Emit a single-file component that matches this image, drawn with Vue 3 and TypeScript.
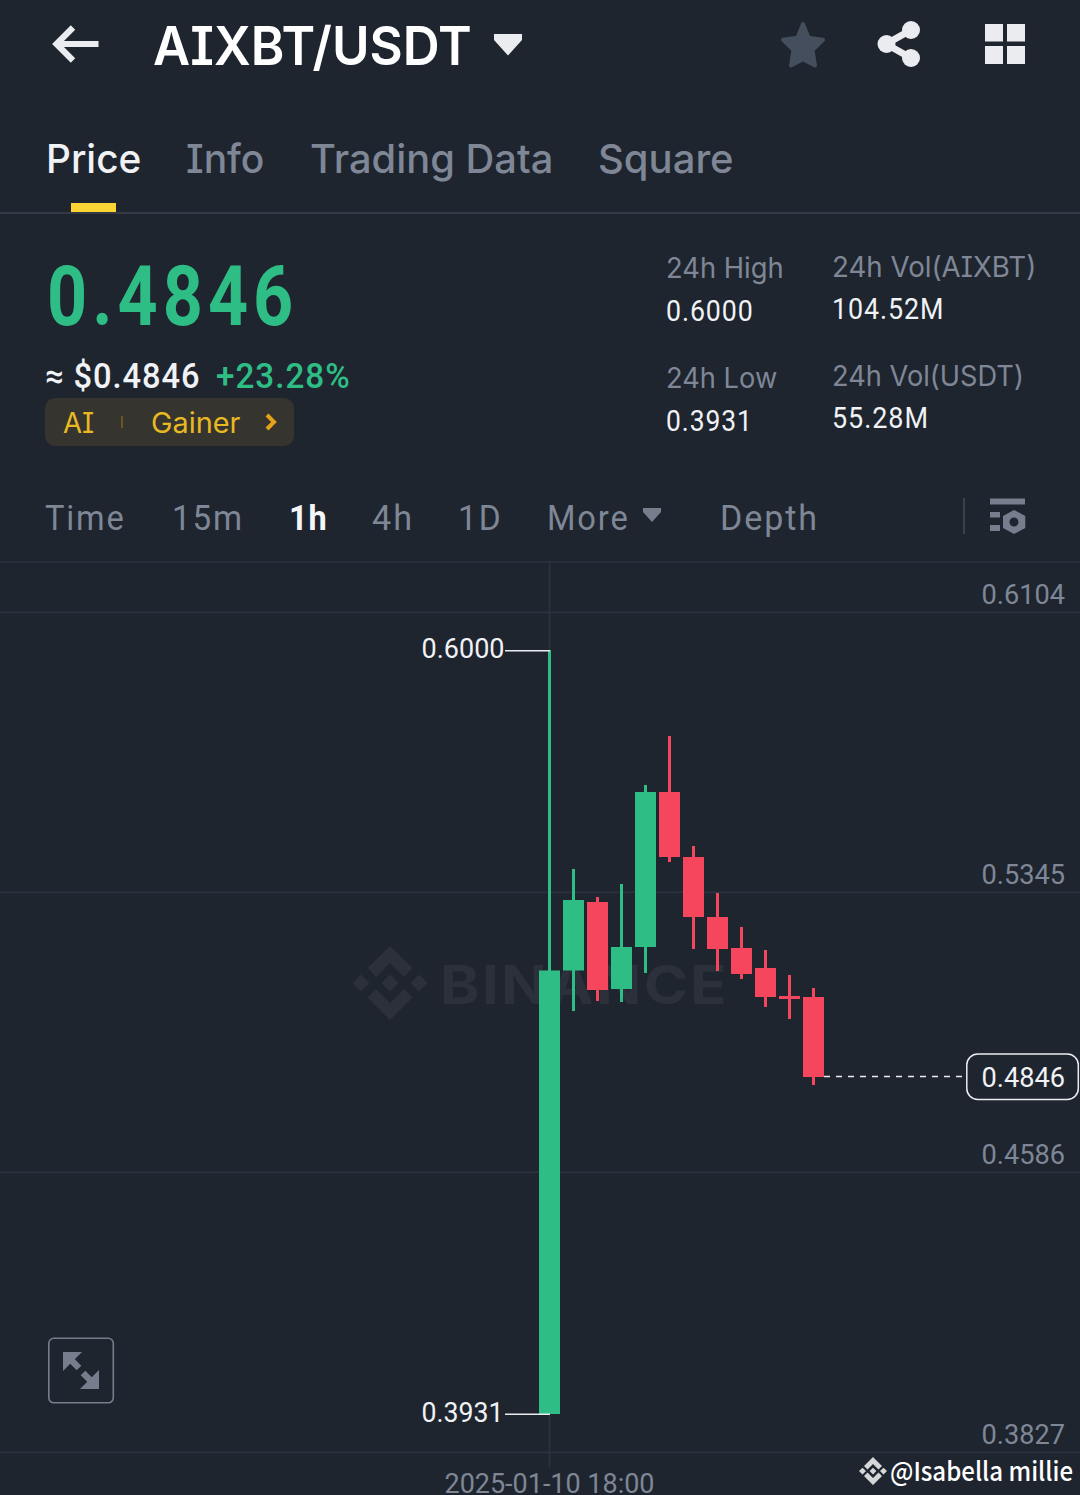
<script setup lang="ts">
import type { Directive } from 'vue'

// Condenses or widens a label so that it takes exactly the given width.
const vFit: Directive<HTMLElement, number> = {
  mounted(el, binding) {
    const natural = el.offsetWidth
    if (!natural) return
    el.style.transform = `scaleX(${binding.value / natural})`
    el.style.marginRight = `${binding.value - natural}px`
  },
}

interface Tab { label: string; width: number }
interface Stat { label: string; labelWidth: number; value: string; valueWidth: number }
interface Candle { open: number; close: number; high: number; low: number; up: boolean }

const tabs: Tab[] = [
  { label: 'Price', width: 95 },
  { label: 'Info', width: 78 },
  { label: 'Trading Data', width: 243 },
  { label: 'Square', width: 136 },
]

const statColumns: Stat[][] = [
  [
    { label: '24h High', labelWidth: 118, value: '0.6000', valueWidth: 88 },
    { label: '24h Low', labelWidth: 111, value: '0.3931', valueWidth: 87 },
  ],
  [
    { label: '24h Vol(AIXBT)', labelWidth: 204, value: '104.52M', valueWidth: 112 },
    { label: '24h Vol(USDT)', labelWidth: 192, value: '55.28M', valueWidth: 97 },
  ],
]

const gridLines = [
  { y: 612, label: '0.6104' },
  { y: 892, label: '0.5345' },
  { y: 1172, label: '0.4586' },
  { y: 1452, label: '0.3827' },
]

const candles: Candle[] = [
  { open: 1414, close: 970.5, high: 650, low: 1414, up: true },
  { open: 970.5, close: 900, high: 869, low: 1011, up: true },
  { open: 902, close: 990, high: 897, low: 1001, up: false },
  { open: 989, close: 947, high: 884, low: 1002, up: true },
  { open: 947, close: 792, high: 785, low: 973, up: true },
  { open: 792, close: 857, high: 736, low: 862, up: false },
  { open: 857, close: 917, high: 846, low: 949, up: false },
  { open: 917, close: 949, high: 893, low: 971, up: false },
  { open: 948, close: 974, high: 927, low: 979, up: false },
  { open: 968, close: 997, high: 950, low: 1007, up: false },
  { open: 996, close: 999, high: 975, low: 1019, up: false },
  { open: 997, close: 1077, high: 988, low: 1085, up: false },
]
</script>

<template>
  <main class="screen">
    <header class="header">
      <svg class="back" width="47" height="40" viewBox="0 0 47 40">
        <path d="M21 3.500 4.500 20 21 36.500M4 20H46.500" fill="none" stroke="#eaecef" stroke-width="6.200" />
      </svg>
      <h1 class="pair"><span v-fit="319" class="fit">AIXBT/USDT</span></h1>
      <svg class="caret" width="28" height="22" viewBox="0 0 28 22">
        <path d="M0 0H28V6L14 21.500 0 6Z" fill="#eaecef" />
      </svg>
      <svg class="star" width="46" height="48" viewBox="0 0 46 48">
        <path d="M23 3 28.500 16.800 43 18.700 32.500 29 35 44.500 23 38.300 11 44.500 13.500 29 3 18.700 17.500 16.800Z" fill="#454e5c" stroke="#454e5c" stroke-width="4" stroke-linejoin="round" />
      </svg>
      <svg class="share" width="44" height="46" viewBox="0 0 44 46">
        <path d="M34 9 9 23 34 37" fill="none" stroke="#eaecef" stroke-width="6.800" />
        <circle cx="34" cy="9" r="9" fill="#eaecef" />
        <circle cx="9.500" cy="23" r="9" fill="#eaecef" />
        <circle cx="34" cy="37" r="9" fill="#eaecef" />
      </svg>
      <svg class="apps" width="40" height="40" viewBox="0 0 40 40">
        <path d="M0 0H18V17.500H0ZM22 0H40V17.500H22ZM0 22H18V40H0ZM22 22H40V40H22Z" fill="#eaecef" />
      </svg>
    </header>

    <nav class="tabs">
      <a v-for="(tab, i) in tabs" :key="tab.label" class="tab" :class="{ active: i === 0 }">
        <span v-fit="tab.width" class="fit">{{ tab.label }}</span>
      </a>
    </nav>

    <section class="summary">
      <div class="quote">
        <div class="price"><span v-fit="251" class="fit">0.4846</span></div>
        <div class="fiat">
          <span v-fit="156" class="fit">≈ $0.4846</span>
          <span v-fit="135" class="fit change">+23.28%</span>
        </div>
        <div class="tags">
          <span v-fit="31" class="fit">AI</span>
          <i class="tag-rule"></i>
          <span v-fit="89" class="fit">Gainer</span>
          <svg class="chevron" width="12" height="18" viewBox="0 0 12 18">
            <path d="M2 2 9 9 2 16" fill="none" stroke="#e6a21a" stroke-width="4" />
          </svg>
        </div>
      </div>
      <div v-for="(column, c) in statColumns" :key="c" class="stats">
        <dl v-for="stat in column" :key="stat.label" class="stat">
          <dt><span v-fit="stat.labelWidth" class="fit">{{ stat.label }}</span></dt>
          <dd><span v-fit="stat.valueWidth" class="fit">{{ stat.value }}</span></dd>
        </dl>
      </div>
    </section>

    <div class="intervals">
      <span class="interval i-time"><span v-fit="81" class="fit">Time</span></span>
      <span class="interval i-15m"><span v-fit="72" class="fit">15m</span></span>
      <span class="interval i-1h"><span v-fit="39" class="fit">1h</span></span>
      <span class="interval i-4h"><span v-fit="42" class="fit">4h</span></span>
      <span class="interval i-1d"><span v-fit="45" class="fit">1D</span></span>
      <span class="interval i-more"><span v-fit="83" class="fit">More</span></span>
      <svg class="more-caret" width="18" height="14" viewBox="0 0 18 14">
        <path d="M0 0H18V4L9 14 0 4Z" fill="#767e8e" />
      </svg>
      <span class="interval i-depth"><span v-fit="99" class="fit">Depth</span></span>
      <i class="rule"></i>
      <svg class="settings" width="36" height="37" viewBox="0 0 36 37">
        <path d="M0 .500H35V6.500H0ZM0 14H10V19.500H0ZM0 27H10V33H0Z" fill="#767e8e" />
        <path fill-rule="evenodd" d="M24 12 35.300 18V30L24 36 13 30V18ZM24 19.500A4.500 4.500 0 1 0 24 28.500 4.500 4.500 0 1 0 24 19.500Z" fill="#767e8e" />
      </svg>
    </div>

    <svg class="chart" width="1080" height="932" viewBox="0 563 1080 932">
      <g stroke="#2d333e" stroke-width="1.600">
        <line v-for="g in gridLines" :key="g.y" x1="0" x2="1080" :y1="g.y + 0.4" :y2="g.y + 0.4" />
        <line x1="549.500" x2="549.500" y1="562" y2="1468" />
      </g>

      <g fill="#2b303b">
        <path d="M390 946 412.500 968 404 977 390 963 376 977 367.500 968ZM390 1020 412.500 997.500 404 989 390 1003 376 989 367.500 997.500ZM361 974.500 369.500 983 361 991.500 352.500 983ZM419 974.500 427.500 983 419 991.500 410.500 983ZM390 974.500 398.500 983 390 991.500 381.500 983Z" />
        <text class="brand" x="440" y="1003.500" textLength="289" lengthAdjust="spacingAndGlyphs">BINANCE</text>
      </g>

      <g v-for="(c, i) in candles" :key="i" :fill="c.up ? '#2ebd85' : '#f6465d'">
        <rect :x="548 + i * 24" :y="c.high" width="3" :height="c.low - c.high" />
        <rect :x="539 + i * 24" :y="Math.min(c.open, c.close)" width="21" :height="Math.abs(c.close - c.open)" />
      </g>

      <g class="axis" fill="#7f8796">
        <text v-for="g in gridLines" :key="g.y" x="981.500" :y="g.y - 8.500" textLength="83.500" lengthAdjust="spacingAndGlyphs">{{ g.label }}</text>
        <text x="444.500" y="1493" textLength="210" lengthAdjust="spacingAndGlyphs">2025-01-10 18:00</text>
      </g>

      <g stroke="#eaecef" stroke-width="1.500">
        <path d="M505 650.700H550M505 1414.200H550" />
        <path d="M824 1076.500H966" stroke-dasharray="6 6" />
        <rect x="966.800" y="1054" width="111.500" height="45.500" rx="11" fill="#1e252f" />
      </g>
      <g class="axis" fill="#f0f2f5">
        <text x="421.500" y="658" textLength="83" lengthAdjust="spacingAndGlyphs">0.6000</text>
        <text x="421.500" y="1422" textLength="82" lengthAdjust="spacingAndGlyphs">0.3931</text>
        <text x="981.500" y="1087" textLength="83.500" lengthAdjust="spacingAndGlyphs">0.4846</text>
      </g>

      <g fill="none" stroke="#767e8e">
        <rect x="48.800" y="1338.300" width="64.500" height="64.500" rx="5" stroke-width="1.600" />
        <path d="M68 1357 79 1368M83 1373 94 1384" stroke-width="6.500" />
      </g>
      <path d="M63 1352H82L63 1371ZM99 1389H80L99 1370Z" fill="#767e8e" />

      <path d="M873 1457 882 1466 878.500 1469.500 873 1464 867.500 1469.500 864 1466ZM873 1485 882 1476 878.500 1472.500 873 1478 867.500 1472.500 864 1476ZM862.500 1467.700 866 1471 862.500 1474.400 859 1471ZM883.500 1467.700 887 1471 883.500 1474.400 880 1471ZM873 1467.700 876.400 1471 873 1474.400 869.600 1471Z" fill="#d5d6d8" />
      <text class="author" x="890" y="1480.500" textLength="183" lengthAdjust="spacingAndGlyphs">@Isabella millie</text>
    </svg>
  </main>
</template>

<style>
body {
  background: #1e252f;
}
</style>

<style scoped>
.screen {
  width: 1080px;
  height: 1495px;
  overflow: hidden;
  background: #1e252f;
  color: #f0f2f5;
  font-family: Inter, sans-serif;
  font-feature-settings: 'cv08' 1;
}

.fit {
  display: inline-block;
  white-space: nowrap;
  transform-origin: 0 50%;
}

svg {
  display: block;
  flex: none;
}

.header {
  display: flex;
  align-items: center;
  height: 92px;
  padding-left: 52px;
}

.back { margin-bottom: 4px; }

.pair {
  margin: 0 0 0 54px;
  width: 341px;
  font-size: 53px;
  font-weight: 600;
  line-height: 92px;
  color: #fff;
}

.caret { margin-bottom: 2px; }
.star { margin: 0 0 2px 258px; }
.share { margin: 0 0 4px 51px; }
.apps { margin: 0 0 4px 64px; }

.tabs {
  display: flex;
  gap: 45px;
  height: 120px;
  padding-left: 46px;
  border-bottom: 2px solid #343a45;
}

.tab {
  display: flex;
  flex-direction: column;
  align-items: center;
  justify-content: space-between;
  padding-top: 37px;
  font-size: 40px;
  font-weight: 500;
  line-height: 60px;
  color: #7f8796;
}

.tab.active { color: #f0f2f5; }

.tab.active::after {
  content: '';
  width: 45px;
  height: 9px;
  background: #fcd535;
}

.summary {
  display: flex;
  height: 259px;
  box-sizing: border-box;
  padding: 32px 0 0 45px;
}

.quote {
  width: 620.5px;
  padding-top: 5px;
  font-family: Roboto, sans-serif;
}

.price {
  padding-left: 2px;
  font-size: 84px;
  font-weight: 700;
  letter-spacing: 6px;
  line-height: 91px;
  color: #2ebd85;
}

.fiat {
  display: flex;
  gap: 15px;
  margin-top: 12px;
  font-size: 34.5px;
  font-weight: 500;
  letter-spacing: 1px;
  line-height: 44px;
}

.change { color: #2ebd85; }

.tags {
  display: flex;
  align-items: center;
  box-sizing: border-box;
  width: 249px;
  height: 48px;
  padding-left: 18px;
  border-radius: 10px;
  background: #36342e;
  color: #e8b923;
  font-family: Inter, sans-serif;
  font-size: 28.5px;
}

.tag-rule {
  width: 2px;
  height: 12px;
  margin: 0 28px 0 27px;
  background: #6b5523;
}

.chevron { margin-left: 24px; }

.stats {
  display: flex;
  flex-direction: column;
  gap: 24px;
  width: 166px;
  padding-top: 1px;
}

.stat { margin: 0; }

.stat dt {
  font-size: 28.5px;
  line-height: 42px;
  color: #7f8796;
}

.stat dd {
  margin: 0;
  font-family: Roboto, sans-serif;
  font-size: 29.5px;
  letter-spacing: 1px;
  line-height: 44px;
}

.stats + .stats {
  gap: 25px;
  padding-top: 0;
}

.stats + .stats .stat dd { line-height: 42px; }

.intervals {
  display: flex;
  align-items: center;
  height: 88px;
  padding-left: 45px;
  border-bottom: 2px solid #292f3a;
  font-family: Roboto, sans-serif;
  font-size: 35px;
  letter-spacing: 2px;
  color: #7f8796;
}

.interval { flex: none; white-space: nowrap; line-height: 84px; padding-top: 4px; }
.i-time { width: 127px; }
.i-15m { width: 117px; }
.i-1h { width: 83px; color: #f5f6f8; font-weight: 700; letter-spacing: 1px; }
.i-4h { width: 86px; }
.i-1d { width: 89px; }
.i-more { width: 96px; }
.i-depth { width: 243px; margin-left: 59px; }
.more-caret { margin-bottom: 4px; }

.rule {
  width: 2px;
  height: 36px;
  margin: 0 25px 3px 0;
  background: #3a414d;
}

.settings { margin-bottom: 2px; }

.chart {
  font-family: Roboto, sans-serif;
  font-feature-settings: normal;
}

.axis { font-size: 28px; }

.brand {
  font-family: Inter, sans-serif;
  font-size: 54px;
  font-weight: 700;
  letter-spacing: 2px;
}

.author {
  fill: #fff;
  font-family: 'Noto Sans CJK SC', sans-serif;
  font-size: 26px;
  font-weight: 500;
}
</style>
